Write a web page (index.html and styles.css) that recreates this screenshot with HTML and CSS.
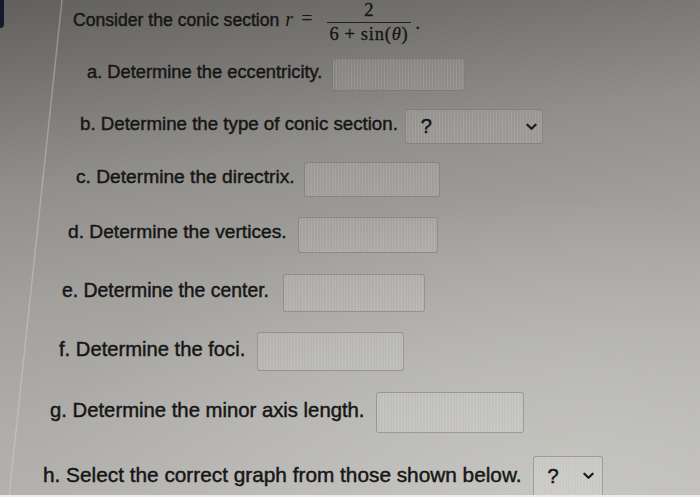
FILE: index.html
```html
<!DOCTYPE html>
<html lang="en">
<head>
<meta charset="utf-8">
<title>Conic section</title>
<link rel="stylesheet" href="styles.css">
</head>
<body>
<div class="screen">
  <div class="bezel"></div>
  <svg class="edge" width="700" height="497" viewBox="0 0 700 497"><line x1="62" y1="0" x2="9" y2="497" stroke="rgba(220,220,215,0.35)" stroke-width="1.5"/></svg>

  <div class="row title">
    <span class="label">Consider the conic section</span>
    <span class="math-r">r</span>
    <span class="math-eq">=</span>
    <span class="frac">
      <span class="num">2</span>
      <span class="den">6<span class="plus">+</span>sin(<i>θ</i>)</span>
    </span>
    <span class="math-dot">.</span>
  </div>

  <div class="row ra"><span class="label">a. Determine the eccentricity.</span><span class="box"></span></div>
  <div class="row rb"><span class="label">b. Determine the type of conic section.</span><span class="box select"><span class="q">?</span><svg class="chev" viewBox="0 0 12 8"><polyline points="1.5,1.5 6,6 10.5,1.5" fill="none" stroke="#1a1a1a" stroke-width="2.4" stroke-linecap="round" stroke-linejoin="round"/></svg></span></div>
  <div class="row rc"><span class="label">c. Determine the directrix.</span><span class="box"></span></div>
  <div class="row rd"><span class="label">d. Determine the vertices.</span><span class="box"></span></div>
  <div class="row re"><span class="label">e. Determine the center.</span><span class="box"></span></div>
  <div class="row rf"><span class="label">f. Determine the foci.</span><span class="box"></span></div>
  <div class="row rg"><span class="label">g. Determine the minor axis length.</span><span class="box"></span></div>
  <div class="row rh"><span class="label">h. Select the correct graph from those shown below.</span><span class="box select"><span class="q">?</span><svg class="chev" viewBox="0 0 12 8"><polyline points="1.5,1.5 6,6 10.5,1.5" fill="none" stroke="#1a1a1a" stroke-width="2.4" stroke-linecap="round" stroke-linejoin="round"/></svg></span></div>

  <div class="bottom-strip"></div>
</div>
</body>
</html>
```

FILE: styles.css
```css
html, body {
  margin: 0;
  padding: 0;
}
body {
  width: 700px;
  height: 497px;
  overflow: hidden;
  font-family: "Liberation Sans", Arial, sans-serif;
  color: #161616;
}
.screen {
  position: relative;
  width: 700px;
  height: 497px;
  overflow: hidden;
  display: flex;
  flex-direction: column;
  background:
    radial-gradient(ellipse 520px 300px at 560px 500px, rgba(215,215,210,0.5), rgba(215,215,210,0) 100%),
    linear-gradient(172deg, #62605c 0%, #767470 14%, #918f8b 32%, #a3a19d 52%, #aeada9 72%, #b8b7b3 100%);
}
.bezel {
  position: absolute;
  left: 0;
  top: 0;
  width: 4px;
  height: 28px;
  background: #141a2c;
  border-bottom-right-radius: 4px;
}
.edge {
  position: absolute;
  left: 0;
  top: 0;
  pointer-events: none;
}
.bottom-strip {
  position: absolute;
  left: 0;
  right: 0;
  bottom: 0;
  height: 2px;
  background: #ecebe8;
}
.row {
  display: flex;
  align-items: center;
  flex: none;
}
.label {
  white-space: nowrap;
  -webkit-text-stroke: 0.45px #161616;
}
.box {
  flex: none;
  box-sizing: border-box;
  border: 1px solid rgba(95,95,90,0.42);
  border-radius: 3px;
  margin-top: 5px;
  background:
    repeating-linear-gradient(90deg, rgba(255,255,255,0.09) 0 1px, rgba(255,255,255,0) 1px 3px),
    rgba(255,255,255,0.08);
}
.select {
  display: flex;
  align-items: center;
  justify-content: space-between;
}
.q {
  font-size: 20px;
  -webkit-text-stroke: 0.5px #161616;
}
.chev {
  width: 11px;
  height: 8px;
}

/* title */
.title {
  height: 46px;
  padding-left: 73px;
  font-size: 17.6px;
  align-items: flex-start;
}
.title .label {
  margin-top: 10px;
}
.math-r {
  font-family: "Liberation Serif", "Times New Roman", serif;
  font-style: italic;
  font-size: 20px;
  margin-top: 8px;
  margin-left: 6px;
}
.math-eq {
  font-family: "Liberation Serif", "Times New Roman", serif;
  font-size: 20px;
  margin-top: 7px;
  margin-left: 8px;
}
.frac {
  display: inline-flex;
  flex-direction: column;
  align-items: center;
  margin-left: 15px;
  font-family: "Liberation Serif", "Times New Roman", serif;
  font-size: 18.5px;
  margin-top: 1px;
  -webkit-text-stroke: 0.35px #161616;
}
.num {
  line-height: 19px;
  padding: 0 0 2px;
}
.den {
  line-height: 20px;
  border-top: 1.5px solid #222;
  padding: 1px 2px 0;
  letter-spacing: 0.8px;
}
.plus {
  margin: 0 5px;
}
.math-dot {
  font-family: "Liberation Serif", "Times New Roman", serif;
  font-size: 18px;
  margin-top: 13px;
  margin-left: 5px;
  -webkit-text-stroke: 0.4px #161616;
}

/* rows, growing with perspective */
.ra { height: 52px; padding-left: 87px; font-size: 18.3px; gap: 10px; }
.ra .box { width: 133px; height: 33px; }

.rb { height: 52px; padding-left: 80px; font-size: 18.7px; gap: 7px; }
.rb .box { width: 138px; height: 35px; padding: 0 5px 0 15px; }

.rc { height: 54px; padding-left: 76px; font-size: 19.2px; gap: 9px; }
.rc .box { width: 136px; height: 35px; }

.rd { height: 56px; padding-left: 68px; font-size: 19.2px; gap: 11px; }
.rd .box { width: 140px; height: 36px; }

.re { height: 60px; padding-left: 62px; font-size: 19.4px; gap: 14px; }
.re .box { width: 142px; height: 38px; }

.rf { height: 58px; padding-left: 59px; font-size: 20.2px; gap: 12px; }
.rf .box { width: 147px; height: 39px; }

.rg { height: 64px; padding-left: 50px; font-size: 20.3px; gap: 11px; }
.rg .box { width: 148px; height: 41px; }

.rh { height: 66px; padding-left: 43px; font-size: 20.8px; gap: 11px; }
.rh .box { width: 70px; height: 48px; padding: 0 8px 8px 14px; margin-top: 10px; }
```
